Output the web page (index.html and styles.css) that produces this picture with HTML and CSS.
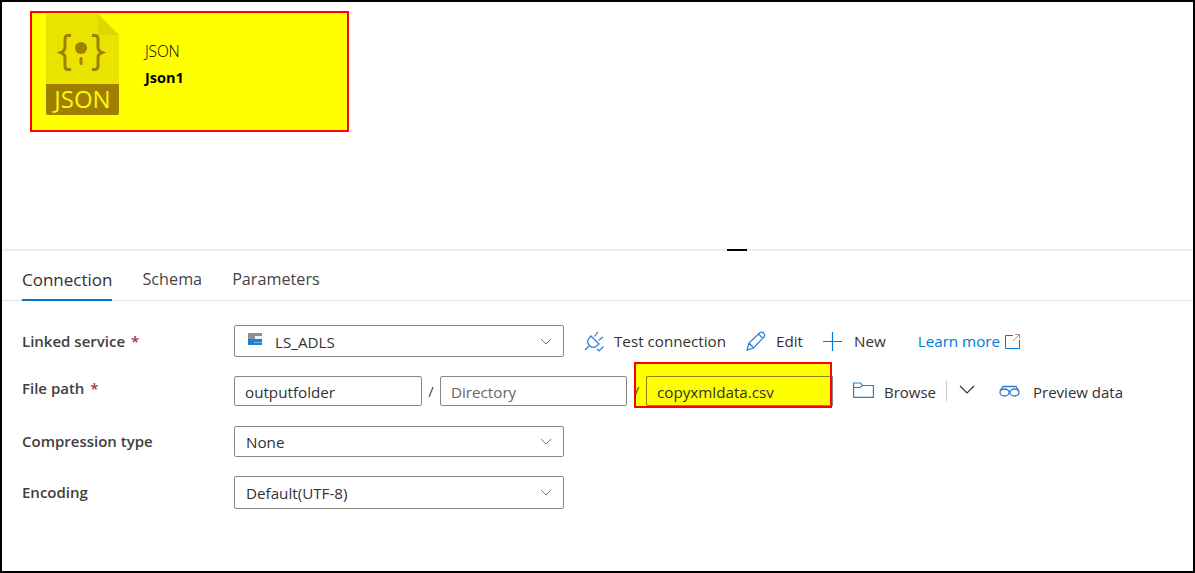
FILE: index.html
```html
<!DOCTYPE html>
<html lang="en">
<head>
<meta charset="utf-8">
<title>JSON dataset</title>
<link rel="stylesheet" href="styles.css">
</head>
<body>
<div class="frame">
  <section class="top">
    <div class="card">
      <svg class="file-icon" viewBox="0 0 74 101" width="74" height="101">
        <path d="M2 0H52L73 21V70H0V2Q0 0 2 0Z" fill="#e8e400"/>
        <path d="M52 0L73 21H52Z" fill="#dcd800"/>
        <path d="M0 70H73V99Q73 101 71 101H2Q0 101 0 99Z" fill="#a07f00"/>
        <circle cx="35" cy="34" r="6" fill="#a07f00"/>
        <rect x="33.500" y="43" width="3" height="8" rx="1.500" fill="#a07f00"/>
        <path d="M25 21.500H22Q19 21.500 19 25V33Q19 37 15 38.500Q19 40 19 44V52Q19 55.500 22 55.500H25" fill="none" stroke="#a07f00" stroke-width="3"/>
        <path d="M46 21.500H49Q52 21.500 52 25V33Q52 37 56 38.500Q52 40 52 44V52Q52 55.500 49 55.500H46" fill="none" stroke="#a07f00" stroke-width="3"/>
        <text class="file-icon-text" x="36.500" y="94" text-anchor="middle">JSON</text>
      </svg>
      <div class="card-text">
        <div class="card-type">JSON</div>
        <div class="card-name">Json1</div>
      </div>
    </div>
  </section>
  <div class="divider"><span class="handle"></span></div>
  <nav class="tabs">
    <span class="tab active">Connection</span>
    <span class="tab">Schema</span>
    <span class="tab">Parameters</span>
  </nav>
  <form class="form">
    <div class="row row-linked">
      <label class="label">Linked service <span class="req">*</span></label>
      <div class="select">
        <svg class="adls" viewBox="0 0 14 12" width="14" height="12">
          <rect width="14" height="12" fill="#8a9199"/>
          <rect x="7" y="3" width="7" height="3" fill="#eef3f8"/>
          <rect y="6" width="14" height="6" fill="#1f7fd6"/>
          <rect x="6" y="9" width="8" height="1" fill="#7db8ea"/>
        </svg>
        <span class="value">LS_ADLS</span>
        <svg class="chev" viewBox="0 0 12 7" width="12" height="7"><path d="M1 1L6 6L11 1" fill="none" stroke="#777" stroke-width="1"/></svg>
      </div>
      <div class="actions">
        <span class="action act-test">
          <svg viewBox="0 0 22 22" width="22" height="22" fill="none" stroke="#2b7cd3" stroke-width="1.200"><path d="M2 20L6 16M15 2L11.500 6.500M20 7L15.500 10.500M8 6L16 14L13 16.500Q9.500 18.500 6.500 15.500Q3.500 12.500 5.500 9Z"/><path d="M14 19L16 21L20.500 16.500"/></svg>
          Test connection
        </span>
        <span class="action act-edit">
          <svg viewBox="0 0 20 20" width="20" height="20" fill="none" stroke="#2b7cd3" stroke-width="1.200"><path d="M1 19L3 12L14 1.500Q16 0.500 18 2.500Q19.500 4.500 18 6L7.500 17Z M3 12L7.500 17 M12.500 3L17 7.500"/></svg>
          Edit
        </span>
        <span class="action act-new">
          <svg viewBox="0 0 19 19" width="19" height="19" fill="none" stroke="#0078d4" stroke-width="1.200"><path d="M9.500 0V19M0 9.500H19"/></svg>
          New
        </span>
        <a class="learn">Learn more
          <svg viewBox="0 0 15 15" width="15" height="15" fill="none" stroke="#0078d4" stroke-width="1"><path d="M8 1.500H0.500V14.500H14.500V6"/><path d="M10 0.500H14.500V5M14.500 0.500L8 7" stroke="#c87aa8"/></svg>
        </a>
      </div>
    </div>
    <div class="row row-path">
      <label class="label">File path <span class="req">*</span></label>
      <div class="path">
        <div class="input input-a">outputfolder</div>
        <span class="slash">/</span>
        <div class="input input-b placeholder">Directory</div>
        <span class="slash slash-c">/</span>
        <div class="input input-c">copyxmldata.csv</div>
        <span class="red-box"></span>
      </div>
      <div class="actions actions-path">
        <span class="action act-browse">
          <svg viewBox="0 0 21 16" width="21" height="16" fill="none" stroke="#2b7cd3" stroke-width="1.200"><path d="M0.600 15.400V1H7.500L9.500 3.500H20.400V15.400Z M0.600 5.500H7L9.500 3.500"/></svg>
          Browse
        </span>
        <span class="sep"></span>
        <svg class="browse-chev" viewBox="0 0 16 9" width="16" height="9"><path d="M1 1L8 8L15 1" fill="none" stroke="#333" stroke-width="1.200"/></svg>
        <span class="action act-preview">
          <svg viewBox="0 0 21 12" width="21" height="12" fill="none" stroke="#2b7cd3" stroke-width="1.300"><ellipse cx="5.500" cy="7.500" rx="4.500" ry="3.500"/><ellipse cx="15.500" cy="7.500" rx="4.500" ry="3.500"/><path d="M1 6L4 1.500H17L20 6M10 6.500H11"/></svg>
          Preview data
        </span>
      </div>
    </div>
    <div class="row row-comp">
      <label class="label">Compression type</label>
      <div class="select">
        <span class="value value-plain">None</span>
        <svg class="chev" viewBox="0 0 12 7" width="12" height="7"><path d="M1 1L6 6L11 1" fill="none" stroke="#777" stroke-width="1"/></svg>
      </div>
    </div>
    <div class="row row-enc">
      <label class="label">Encoding</label>
      <div class="select">
        <span class="value value-plain">Default(UTF-8)</span>
        <svg class="chev" viewBox="0 0 12 7" width="12" height="7"><path d="M1 1L6 6L11 1" fill="none" stroke="#777" stroke-width="1"/></svg>
      </div>
    </div>
  </form>
</div>
</body>
</html>
```
FILE: styles.css
```css
* { box-sizing: border-box; }
html, body { margin: 0; padding: 0; background: #fff; }
body { font-family: "Open Sans", "Noto Sans", "Liberation Sans", sans-serif; color: #323130; overflow: hidden; }

.frame {
  width: 1195px;
  height: 573px;
  border: 2px solid #000;
  background: #fff;
  overflow: hidden;
}

.top { height: 247px; padding: 9px 0 0 28px; }
.card {
  width: 319px;
  height: 121px;
  background: #ff0;
  border: 2px solid #f00;
  display: flex;
  align-items: flex-start;
  padding: 1px 0 0 14px;
  color: #000;
}
.file-icon { flex: none; }
.file-icon-text { font-family: "Open Sans", sans-serif; font-size: 24px; font-weight: 500; fill: #fcf80a; }
.card-text { margin-left: 25px; padding-top: 28px; }
.card-type { font-size: 15.500px; line-height: 19px; font-weight: 300; letter-spacing: -0.200px; }
.card-name { font-size: 14.500px; line-height: 19px; font-weight: 700; margin-top: 7px; }

.divider { height: 2px; background: #eeeeee; position: relative; }
.handle { position: absolute; left: 725px; top: 0; width: 20px; height: 2px; background: #000; }

.tabs { height: 50px; display: flex; gap: 30px; padding: 0 0 0 20px; border-bottom: 1px solid #e1e1e1; }
.tab { font-size: 16.200px; line-height: 21px; padding-top: 18px; height: 50px; color: #444; white-space: nowrap; }
.tab.active { color: #323130; font-size: 17px; font-weight: 500; border-bottom: 2px solid #0078d4; }

.form { display: block; }
.row { display: flex; align-items: flex-start; padding-left: 20px; white-space: nowrap; }
.label { width: 212px; flex: none; font-size: 15px; font-weight: 600; color: #404040; line-height: 20px; }
.req { color: #a4373a; margin-left: 2px; }
.row-linked { margin-top: 24px; height: 32px; }
.row-linked .label { margin-top: 6px; }
.row-path { margin-top: 19px; height: 30px; }
.row-path .label { margin-top: 2px; }
.row-comp { margin-top: 20px; height: 31px; }
.row-comp .label { margin-top: 5px; }
.row-enc { margin-top: 19px; height: 33px; }
.row-enc .label { margin-top: 6px; }

.select {
  width: 330px;
  height: 100%;
  flex: none;
  border: 1px solid #8a8886;
  border-radius: 2px;
  display: flex;
  align-items: center;
  padding: 0 11px 0 13px;
  font-size: 15.200px;
  color: #323130;
}
.adls { flex: none; margin-top: -4px; }
.value { margin-left: 13px; flex: 1; padding-top: 1px; }
.value-plain { margin-left: -2px; padding-top: 0; }
.chev { flex: none; }

.path { display: flex; align-items: flex-start; position: relative; width: 598px; flex: none; height: 100%; }
.input { height: 30px; border: 1px solid #8a8886; border-radius: 2px; font-size: 15.200px; line-height: 30px; padding-left: 10px; }
.input-a { width: 188px; }
.input-b { width: 187px; }
.input-c { width: 185px; position: relative; z-index: 1; color: #323130; border-color: #8a8600; border-right: 0; }
.placeholder { color: #666; }
.slash { width: 18px; text-align: center; font-size: 15px; line-height: 30px; color: #444; flex: none; position: relative; z-index: 1; }
.slash-c { width: 19px; }
.red-box { position: absolute; left: 400px; top: -14px; width: 198px; height: 46px; border: 2px solid #f00; background: #ff0; }
.red-box::after { content: ""; position: absolute; left: 196px; top: 12px; width: 1px; height: 30px; background: #8a8886; }

.actions { display: flex; align-items: center; height: 32px; font-size: 15.200px; color: #323130; }
.action { display: inline-flex; align-items: center; }
.act-test { margin-left: 19px; }
.act-test svg { margin-right: 9px; }
.act-edit { margin-left: 20px; }
.act-edit svg { margin-right: 10px; }
.act-new { margin-left: 20px; }
.act-new svg { margin-right: 12px; }
.learn { margin-left: 32px; color: #0078d4; display: inline-flex; align-items: center; gap: 5px; }

.actions-path { height: 30px; font-size: 15px; padding-top: 1px; }
.act-browse { margin-left: 21px; }
.act-browse svg { margin-right: 10px; margin-top: -4px; }
.sep { width: 1px; height: 20px; background: #c8c6c4; margin-left: 10px; margin-top: -1px; }
.browse-chev { margin-left: 12px; margin-top: -4px; }
.act-preview { margin-left: 24px; }
.act-preview svg { margin-right: 13px; margin-top: -2px; }
```
